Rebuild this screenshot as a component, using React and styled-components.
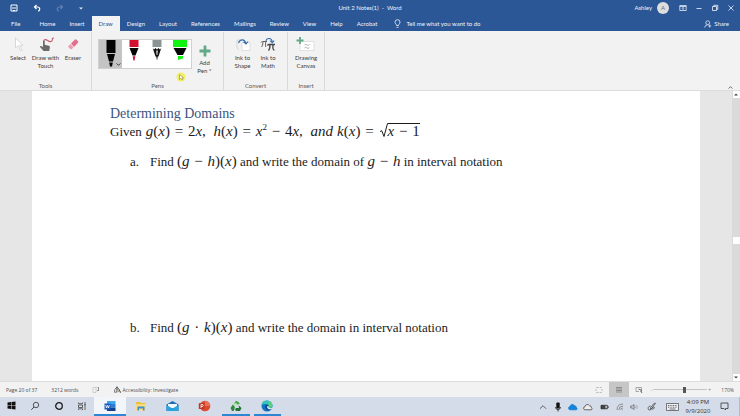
import styled, { createGlobalStyle, css } from "styled-components";
import { useState } from "react";

const GlobalStyle = createGlobalStyle`
  * {
    box-sizing: border-box;
    margin: 0;
    padding: 0;
  }

  body {
    font-family: Lato, "Open Sans", sans-serif;
    font-size: 6px;
    line-height: 8px;
    color: #3c3c3c;
    background-color: #e6e6e6;
  }

  button, input {
    font: inherit;
    color: inherit;
    border: none;
    background: none;
  }

  svg {
    display: block;
    flex-shrink: 0;
  }
`;

const Window = styled.div`
  min-height: 100vh;
  display: flex;
  flex-direction: column;
`;

const Header = styled.header`
  background-color: #2b5797;
  color: #eef3fa;
`;

const TitleBar = styled.div`
  display: grid;
  grid-template-columns: 1fr auto 1fr;
  align-items: center;
  height: 16px;
`;

const QuickAccess = styled.div`
  display: flex;
  align-items: center;
  gap: 15px;
  padding-left: 10px;
`;

const Title = styled.h1`
  font-size: 6px;
  font-weight: 400;
`;

const WindowControls = styled.div`
  display: flex;
  align-items: center;
  justify-content: flex-end;
  gap: 8px;
  padding-right: 5px;
  height: 12px;
`;

const Account = styled.button`
  display: flex;
  align-items: center;
  gap: 5px;
  margin-right: 2px;
`;

const Avatar = styled.span`
  width: 12px;
  height: 12px;
  border-radius: 50%;
  background-color: #dedede;
  color: #6b6b6b;
  line-height: 12px;
  text-align: center;
`;

const PlainButton = styled.button`
  display: flex;
  align-items: center;
  justify-content: center;
  opacity: ${(p) => (p.disabled ? 0.25 : 1)};
`;

const TabBar = styled.nav`
  display: flex;
  align-items: stretch;
  height: 15px;
  padding: 0 11px 0 4px;
`;

const Tab = styled.button`
  padding: 0 7px;
  white-space: nowrap;

  &:first-child {
    margin-right: 5px;
  }

  ${(p) =>
    p.$active &&
    css`
      background-color: #f3f3f3;
      color: #2b579a;
    `}
`;

const TellMe = styled.button`
  display: flex;
  align-items: center;
  gap: 5px;
  margin-left: 10px;
`;

const Share = styled.button`
  display: flex;
  align-items: center;
  gap: 2px;
  margin-left: auto;
`;

const Ribbon = styled.section`
  display: flex;
  height: 60px;
  padding-top: 1px;
  background-color: #f2f2f2;
  border-bottom: 1px solid #dcdcdc;
`;

const Group = styled.div`
  display: flex;
  flex-direction: column;
  justify-content: space-between;
  padding: 5px ${(p) => p.$pad}px 0;
  border-right: 1px solid #d9d9d9;
`;

const GroupItems = styled.div`
  display: flex;
  align-items: flex-start;
`;

const GroupLabel = styled.h2`
  font-size: 6px;
  font-weight: 400;
  text-align: center;
  color: #5c5c5c;
`;

const Tool = styled.button`
  display: flex;
  flex-direction: column;
  align-items: center;
  gap: 1px;
  width: ${(p) => p.$width}px;
  padding-top: ${(p) => (p.$low ? 7 : 0)}px;
  text-align: center;
`;

const PenGallery = styled.div`
  display: grid;
  grid-template-columns: repeat(4, 23px);
  height: 30px;
  margin-top: 2px;
  border: 1px solid #d0d0d0;
  background-color: #fff;
`;

const PenButton = styled.button`
  position: relative;
  display: flex;
  justify-content: center;
  background-color: ${(p) => (p.$active ? "#c4c4c4" : "#fff")};
`;

const PenMenu = styled.span`
  position: absolute;
  right: 1px;
  bottom: 1px;
`;

const Pointer = styled.svg`
  position: absolute;
  left: 176px;
  top: 72px;
`;

const Collapse = styled.button`
  align-self: flex-end;
  margin: 0 7px 0 auto;
`;

const Workspace = styled.main`
  flex: 1;
  display: flex;
  background-color: #e6e6e6;
`;

const Paper = styled.article`
  flex: 1;
  margin: 0 32px;
  padding: 14px 78px 0;
  background-color: #fff;
  color: #1c1c1c;
  font-family: "Liberation Serif", serif;
  font-size: 13px;
  line-height: 17px;
`;

const Heading = styled.h2`
  font-size: 14px;
  font-weight: 400;
  line-height: 18px;
  color: #3a5482;
`;

const Given = styled.p`
  display: flex;
  gap: 4px;
  white-space: nowrap;
`;

const Questions = styled.ol`
  list-style: none;
  counter-reset: question;
  padding: 13px 0 0 20px;
`;

const Question = styled.li`
  height: 166px;
  white-space: nowrap;
  counter-increment: question;

  &::before {
    content: counter(question, lower-alpha) ".";
    display: inline-block;
    width: 20px;
  }

  &:last-child {
    height: 54px;
  }
`;

const Math = styled.span`
  font-family: "Liberation Serif", serif;
  font-size: 15px;

  sup {
    font-size: 9px;
    line-height: 1px;
  }
`;

const Op = styled.span`
  margin: 0 1px;
`;

const Root = styled.span`
  display: inline-flex;
`;

const Radicand = styled.span`
  border-top: 1px solid #1c1c1c;
  height: 15px;
  line-height: 15px;
`;

const ScrollBar = styled.div`
  display: flex;
  flex-direction: column;
  align-items: center;
  justify-content: space-between;
  width: 8px;
  background-color: #dadada;
`;

const ScrollButton = styled.button`
  display: grid;
  place-content: center;
  width: 7px;
  height: 7px;
  background-color: #fff;
`;

const ScrollThumb = styled(ScrollButton)`
  margin-top: 9px;
`;

const StatusBar = styled.footer`
  display: flex;
  align-items: center;
  height: 16px;
  padding: 0 6px;
  border-top: 1px solid #dcdcdc;
  background-color: #f2f2f3;
  color: #4c4c4c;
  font-family: "Open Sans", sans-serif;
  font-size: 5px;
`;

const StatusItems = styled.div`
  display: flex;
  align-items: center;
  gap: 14px;
`;

const AccessItem = styled.button`
  display: flex;
  align-items: center;
  gap: 1px;
`;

const ViewItems = styled.div`
  display: flex;
  align-items: center;
  height: 15px;
  margin-left: auto;
`;

const ViewButton = styled.button`
  display: grid;
  place-content: center;
  width: 20px;
  height: 15px;
  background-color: ${(p) => (p.$active ? "#c6c6c6" : "transparent")};
`;

const Slider = styled.input`
  appearance: none;
  width: 54px;
  height: 7px;
  background: linear-gradient(#c4c4c4, #c4c4c4) center / 100% 1px no-repeat;

  &::-webkit-slider-thumb {
    appearance: none;
    width: 3px;
    height: 6px;
    background-color: #555;
  }
`;

const Zoom = styled.div`
  display: flex;
  align-items: center;
  gap: 1px;
  margin-left: 2px;
  color: #8a8a8a;
`;

const ZoomValue = styled.button`
  width: 23px;
  text-align: right;
  color: #555;
`;

const TaskBar = styled.nav`
  display: flex;
  height: 19px;
  background-color: #d5dce9;
`;

const SystemButtons = styled.div`
  display: grid;
  grid-template-columns: repeat(4, 1fr);
  width: 94px;
`;

const Apps = styled.div`
  display: grid;
  grid-template-columns: repeat(6, 1fr);
  width: 189px;
`;

const AppButton = styled.button`
  display: grid;
  place-content: center;
  margin: 0 ${(p) => (p.$running && !p.$active ? 2 : 0)}px;
  background-color: ${(p) => (p.$active ? "#f2f5fa" : "transparent")};
  border-bottom: 2px solid ${(p) => (p.$running ? "#2f86d2" : "transparent")};
`;

const Tray = styled.div`
  display: flex;
  align-items: center;
  margin-left: auto;
  padding-right: 5px;
  border-right: 1px solid #b4bccb;
`;

const TrayButton = styled.button`
  display: grid;
  place-content: center;
  width: ${(p) => p.$width || 16}px;
  height: 19px;
`;

const Clock = styled.time`
  width: 32px;
  text-align: center;
  color: #333;
  font-family: "Open Sans", sans-serif;
  line-height: 9px;
`;

const SaveIcon = () => (
  <svg width="8" height="8" viewBox="0 0 8 8">
    <path d="M1 1h6v6H1z" fill="none" stroke="#fff" />
    <path d="M2 4h4M3 6.5h2" stroke="#fff" />
  </svg>
);

const UndoIcon = ({ flip }) => (
  <svg width="8" height="8" viewBox="0 0 8 8" transform={flip ? "scale(-1 1)" : undefined}>
    <path d="M3.5 1L1.5 3l2 2M1.7 3H4.5c3 0 2.7 4 .5 4" fill="none" stroke="#fff" strokeWidth="1.2" />
  </svg>
);

const Chevron = ({ up, color = "#555", size = 5 }) => (
  <svg width={size} height={size} viewBox="0 0 6 6">
    <path d={up ? "M.7 4.3L3 2l2.3 2.3" : "M.7 1.7L3 4l2.3-2.3"} fill="none" stroke={color} strokeWidth={size > 5 ? 0.7 : 1} />
  </svg>
);

const Triangle = ({ up, color = "#444" }) => (
  <svg width="4" height="3" viewBox="0 0 4 3">
    <path d={up ? "M2 .5L4 2.5H0z" : "M0 .5h4L2 2.5z"} fill={color} />
  </svg>
);

const SelectIcon = () => (
  <svg width="14" height="16" viewBox="0 0 14 16">
    <path d="M4.500 1v10l2.500-2.300 2.500 5 1.600-.8-2.500-4.700H12z" fill="#fff" stroke="#c9c9c9" strokeWidth=".7" />
  </svg>
);

const TouchIcon = () => (
  <svg width="18" height="16" viewBox="0 0 18 16">
    <path d="M7 3C10 1 11 5.500 14 4.500 17 3.500 13.500 1 17 1" fill="none" stroke="#c55a6b" strokeWidth="1.100" />
    <path
      d="M6 3.500q1-.7 1.700 0v4.300l4.300 1q1 .3.900 1.500L12.200 14H6.600L3 10q-.2-1.200 1-1l2 1z"
      fill="#6a6a6a"
    />
  </svg>
);

const EraserIcon = () => (
  <svg width="14" height="16" viewBox="0 0 14 16">
    <path d="M5 6.500L9 2.500q.8-.6 1.500.2L12 4.300q.7.7 0 1.400L8 10z" fill="#e0708d" />
    <path d="M4.500 7l3 3.500-1.700 1.500q-.9.700-1.600 0L2.500 10.300q-.6-.8.100-1.500z" fill="#eb9db0" />
  </svg>
);

const PenIcon = ({ kind, color }) => {
  if (kind === "marker") {
    return (
      <svg width="16" height="28" viewBox="0 0 16 28">
        <path d="M1 0h14v7H1z" fill={color} />
        <path d="M1.500 8h13L11 15H5.500z" fill="#050505" />
        <path d="M6 16h5v2.500L6 20z" fill={color} />
      </svg>
    );
  }
  if (kind === "large") {
    return (
      <svg width="10" height="28" viewBox="0 0 10 28">
        <path d="M.5 0h9v13h-9z" fill={color} />
        <path d="M1 14h8L7 21.500H3z" fill={color} />
        <path d="M3.200 22.500h3.600L6 26.500H4z" fill={color} />
      </svg>
    );
  }
  return (
    <svg width="10" height="28" viewBox="0 0 10 28">
      <path d="M.5 0h9v7h-9z" fill={color} />
      {kind === "pencil" ? (
        <>
          <path d="M.7 8L2 9.500 3.500 8 5 9.500 6.500 8 8 9.500 9.300 8 6.500 16.500h-3z" fill="#111" />
          <path d="M4.200 10.500h1.600L5.400 15h-.8z" fill="#e7e7e7" />
          <path d="M4 16h2L5 20.500z" fill="#222" />
        </>
      ) : (
        <>
          <path d="M.5 8h9L6.500 15.500h-3z" fill="#050505" />
          <path d="M3.700 16.200h2.600L5.600 20.500H4.400z" fill={color} />
        </>
      )}
    </svg>
  );
};

const PlusIcon = () => (
  <svg width="14" height="14" viewBox="0 0 14 14">
    <path d="M7 1.500v11M1.500 7h11" stroke="#62a987" strokeWidth="2.800" />
  </svg>
);

const InkShapeIcon = () => (
  <svg width="16" height="16" viewBox="0 0 16 16">
    <path d="M7 5.500h8v8H7z" fill="#fff" stroke="#d2d2d2" strokeWidth=".7" />
    <path d="M2 3h4M2 3v8l2 2" fill="none" stroke="#c9c9c9" strokeWidth=".7" />
    <path d="M3.500 6C5 1.500 10 2 11 6.500M8.500 5l2.600 2L13 4.500" fill="none" stroke="#3d72ad" strokeWidth="1.200" />
  </svg>
);

const InkMathIcon = () => (
  <svg width="16" height="16" viewBox="0 0 16 16">
    <path d="M1 5.500q.5-1 1.500-1H7M3 4.600q0 4-1.500 5.400M5.700 4.600q-.3 4 0 5.400" fill="none" stroke="#666" strokeWidth="1" />
    <path d="M6 4C6.500.5 12 .5 12.200 5M10 3.700l2.200 2 2-2" fill="none" stroke="#3d72ad" strokeWidth="1.100" />
    <path d="M7.500 8.500q.5-1 1.500-1h6M10 7.600q0 4.500-1.500 6M13 7.600q-.6 5.800 1.500 5.600" fill="none" stroke="#444" strokeWidth="1.300" />
  </svg>
);

const CanvasIcon = () => (
  <svg width="20" height="16" viewBox="0 0 20 16">
    <path d="M4 4.500h14v9H4z" fill="#fff" stroke="#d6d6d6" strokeWidth=".7" />
    <path d="M4 0v7M.5 3.500h7" stroke="#62a987" strokeWidth="1.800" />
    <path d="M8.500 8c2-2 3 2 5-.5M8.500 11c2-2 3 2 5-.5" fill="none" stroke="#999" strokeWidth=".8" />
  </svg>
);

const BulbIcon = () => (
  <svg width="7" height="10" viewBox="0 0 7 10">
    <path d="M2.500 6.500C2.500 5 1 4.800 1 3.200a2.500 2.500 0 015 0C6 4.800 4.500 5 4.500 6.500zM2.500 8.300h2" fill="none" stroke="#dce6f4" strokeWidth=".9" />
  </svg>
);

const ShareIcon = () => (
  <svg width="8" height="8" viewBox="0 0 8 8">
    <circle cx="3.700" cy="2.700" r="1.900" fill="none" stroke="#e4ebf5" strokeWidth=".8" />
    <path d="M.7 7.500Q1 4.800 3.500 4.800M5.700 4.500v3M4.200 6h3" fill="none" stroke="#e4ebf5" strokeWidth=".8" />
  </svg>
);

const RibbonOptionsIcon = () => (
  <svg width="8" height="8" viewBox="0 0 8 8">
    <path d="M.8 1.500h6.400v5H.8zM.8 2.500h6.400M4 6V3.500M3 4.500l1-1 1 1" fill="none" stroke="#e4ebf5" strokeWidth=".8" />
  </svg>
);

const WindowIcon = ({ d }) => (
  <svg width="8" height="8" viewBox="0 0 8 8">
    <path d={d} fill="none" stroke="#f1f5fa" strokeWidth=".8" />
  </svg>
);

const ProofIcon = () => (
  <svg width="8" height="8" viewBox="0 0 8 8">
    <path d="M1 1.500h3v5H1zM4 1.500h2" fill="none" stroke="#bbb" strokeWidth=".6" />
    <path d="M6.500 1v3M5 4.500h2" stroke="#777" strokeWidth=".8" />
  </svg>
);

const AccessIcon = () => (
  <svg width="7" height="8" viewBox="0 0 7 8">
    <circle cx="3" cy="1.300" r=".9" fill="#444" />
    <path d="M1 2.500L3 3l2-.5M3 3v2L1.500 7M.7 3.500v3M5 3l1.500 4M3.500 6q2-3 3-.5" fill="none" stroke="#444" strokeWidth=".8" />
  </svg>
);

const ReadIcon = () => (
  <svg width="8" height="8" viewBox="0 0 8 8">
    <path d="M1 1.500h2.500M4.500 1.500H7M1 6.500h2.500M4.500 6.500H7M1 3v2M7 3v2" stroke="#aaa" strokeWidth=".7" />
  </svg>
);

const PrintIcon = () => (
  <svg width="8" height="8" viewBox="0 0 8 8">
    <path d="M1 1.500h6M1 3h6M1 4.500h6M1 6h6" stroke="#7d7d7d" strokeWidth=".8" />
  </svg>
);

const WebIcon = () => (
  <svg width="8" height="8" viewBox="0 0 8 8">
    <path d="M6.500 4V1.500H1v4h3" fill="none" stroke="#888" strokeWidth=".7" />
    <path d="M3.500 3l3.500 1.500-1.300.5L7 7" fill="none" stroke="#555" strokeWidth=".9" />
  </svg>
);

const WindowsIcon = () => (
  <svg width="9" height="9" viewBox="0 0 9 9">
    <path d="M.5 1.500L4 1v3.300H.5zM4.500 1l4-.6v3.900h-4zM.5 4.800H4V8l-3.500-.5zM4.500 4.800h4v3.800l-4-.6z" fill="#111" />
  </svg>
);

const SearchIcon = () => (
  <svg width="10" height="10" viewBox="0 0 10 10">
    <circle cx="6" cy="4" r="2.700" fill="none" stroke="#333" strokeWidth=".8" />
    <path d="M4 6L1.300 8.800" stroke="#333" strokeWidth=".9" />
  </svg>
);

const CortanaIcon = () => (
  <svg width="10" height="10" viewBox="0 0 10 10">
    <circle cx="5" cy="5" r="3.300" fill="none" stroke="#1a1a1a" strokeWidth="1.300" />
  </svg>
);

const TaskViewIcon = () => (
  <svg width="10" height="10" viewBox="0 0 10 10">
    <path d="M1.500 1.500v1.200h4V1.500M1.500 4h4v2.500h-4zM1.500 9V7.800h4V9M8 1v8M7.300 3.700h1.500" fill="none" stroke="#444" strokeWidth=".8" />
  </svg>
);

const WordIcon = () => (
  <svg width="12" height="12" viewBox="0 0 12 12">
    <path d="M3 1h8.500v3H3z" fill="#41a5ee" />
    <path d="M3 4h8.500v3.500H3z" fill="#2b7cd3" />
    <path d="M3 7.500h8.500V11H3z" fill="#103f91" />
    <path d="M.5 3.500h6v6h-6z" fill="#185abd" />
    <path d="M1.700 5l.8 3 1-2.500 1 2.500.8-3" fill="none" stroke="#fff" strokeWidth=".8" />
  </svg>
);

const FolderIcon = () => (
  <svg width="12" height="12" viewBox="0 0 12 12">
    <path d="M1 2h4l1 1h4.500v3H1z" fill="#f0bd3a" />
    <path d="M1 4h10v6.500H1z" fill="#f9dc7c" />
    <path d="M2.500 6.500h7v4H8V8.500H4v2H2.500z" fill="#3f90cf" />
  </svg>
);

const MailIcon = () => (
  <svg width="13" height="12" viewBox="0 0 13 12">
    <path d="M.5 4.500L6.500 1l6 3.500V11H.5z" fill="#1c6fb9" />
    <path d="M2 4h9v4H2z" fill="#f5f9fc" />
    <path d="M.5 5l6 3.500 6-3.500v6H.5z" fill="#2ba4dd" />
  </svg>
);

const PowerPointIcon = () => (
  <svg width="13" height="12" viewBox="0 0 13 12">
    <circle cx="7" cy="6" r="5.300" fill="#dc4a30" />
    <path d="M7 .7A5.300 5.300 0 0112.300 6H7z" fill="#ea7257" />
    <path d="M.8 3.200h5.700v5.700H.8z" fill="#c0321c" />
    <path d="M3 8V4.500h1q1.300 0 1.300 1T4 6.500H3" fill="none" stroke="#fff" strokeWidth=".8" />
  </svg>
);

const RecycleIcon = () => (
  <svg width="12" height="12" viewBox="0 0 12 12">
    <path d="M3.700 4L6 .7l2.700 1.400L9.800 4 7 4.500 6 3z" fill="#47a845" />
    <path d="M2.800 4.500L5 7 3.800 11H2L.5 8z" fill="#318b3d" />
    <path d="M8.500 5.200L11.500 8 10 11H6l-1-1.700L6 8h3z" fill="#237436" />
    <path d="M6 3l1 1.500L5 7 3.500 4.700z" fill="#b8e4a6" />
  </svg>
);

const EdgeIcon = () => (
  <svg width="12" height="12" viewBox="0 0 12 12">
    <circle cx="6" cy="6" r="5.500" fill="#1475c5" />
    <path d="M.5 5C1-.8 10-1 11.500 5c.4 2-1 3.200-3.200 3-1.300-.2-1-1-.7-1.600C8 4 4 3 .5 5z" fill="#36c4b5" />
    <path d="M8 1c4 1.500 4.500 6.500.3 7-1.300-.2-1-1-.7-1.600z" fill="#61d273" />
    <path d="M7.500 6.200C6 6 6 9 10.500 9c-3 3.500-8-.2-6-3.500C5.500 4.500 7.500 4.500 7.500 6.200z" fill="#0d478e" />
    <path d="M7.500 6q-1 1.700 2.500 2.300L11.500 7.500v1L9 9.500Q5.500 8.500 6.200 6.300z" fill="#eaf4fa" />
  </svg>
);

const MicIcon = () => (
  <svg width="8" height="10" viewBox="0 0 8 10">
    <rect x="2.300" y=".5" width="3.400" height="6" rx="1" fill="#111" />
    <path d="M1.500 5q0 2.500 2.500 2.500T6.500 5M4 7.500v2" fill="none" stroke="#111" strokeWidth=".8" />
  </svg>
);

const CloudIcon = ({ fill, stroke }) => (
  <svg width="10" height="8" viewBox="0 0 10 8">
    <path d="M2.300 6.800a1.600 1.600 0 01-.2-3.200 2.300 2.300 0 014.300-.9 2 2 0 012 2 1.100 1.100 0 01-.2 2.100z" fill={fill} stroke={stroke} strokeWidth=".9" />
  </svg>
);

const BatteryIcon = () => (
  <svg width="9" height="8" viewBox="0 0 9 8">
    <path d="M1 2.300h6.300v3.500H1z" fill="#444" stroke="#222" strokeWidth=".7" />
    <path d="M5.500 2.800h1.300v2.500H5.500z" fill="#ddd" />
    <path d="M8.300 3.300v1.500" stroke="#222" strokeWidth=".8" />
  </svg>
);

const WifiIcon = () => (
  <svg width="8" height="8" viewBox="0 0 8 8">
    <path d="M1 7Q1 1 7 1M2.800 7Q3 3 7 3M4.600 7Q4.700 5 7 5M6.500 7H7" fill="none" stroke="#777" strokeWidth=".8" />
  </svg>
);

const SpeakerIcon = () => (
  <svg width="9" height="8" viewBox="0 0 9 8">
    <path d="M.8 3h1.400L4 1.500v5L2.200 5H.8z" fill="none" stroke="#555" strokeWidth=".7" />
    <path d="M5.200 3v2M6.700 2q1 2 0 4" fill="none" stroke="#888" strokeWidth=".6" />
  </svg>
);

const StylusIcon = () => (
  <svg width="10" height="10" viewBox="0 0 10 10">
    <path d="M8.500 1.300L4.500 6.500l-1 .3v-1.200L7.500 1zM3.500 4c-3 0-3 4-1 4 2.500 0 2.500-3 4-3 2 0 0 3-2 2" fill="none" stroke="#333" strokeWidth=".7" />
  </svg>
);

const KeyboardIcon = () => (
  <svg width="13" height="8" viewBox="0 0 13 8">
    <path d="M.5.500h12v7H.5z" fill="#eef1f6" stroke="#444" strokeWidth=".7" />
    <path d="M2 2.500h9M2 4.200h9" stroke="#555" strokeWidth=".9" strokeDasharray="1 .7" />
    <path d="M3.500 6h6" stroke="#555" strokeWidth=".8" />
  </svg>
);

const NoticeIcon = () => (
  <svg width="9" height="9" viewBox="0 0 9 9">
    <path d="M1 1h7v5.500H5.500V8L4 6.500H1z" fill="none" stroke="#333" strokeWidth=".8" />
  </svg>
);

const RadicalIcon = () => (
  <svg width="9" height="15" viewBox="0 0 9 15">
    <path d="M1 8.500l1.700-.8L5 13.500 8.500.5H9" fill="none" stroke="#1c1c1c" strokeWidth="1" />
  </svg>
);

const tabs = [
  "File",
  "Home",
  "Insert",
  "Draw",
  "Design",
  "Layout",
  "References",
  "Mailings",
  "Review",
  "View",
  "Help",
  "Acrobat",
];

const pens = [
  { kind: "large", color: "#050505", label: "Black pen" },
  { kind: "pen", color: "#d30f32", label: "Red pen" },
  { kind: "pencil", color: "#8b9494", label: "Pencil" },
  { kind: "marker", color: "#10f510", label: "Highlighter" },
];

const apps = [
  { label: "Word", icon: <WordIcon />, active: true, running: true },
  { label: "File Explorer", icon: <FolderIcon /> },
  { label: "Mail", icon: <MailIcon /> },
  { label: "PowerPoint", icon: <PowerPointIcon /> },
  { label: "Camtasia", icon: <RecycleIcon />, running: true },
  { label: "Edge", icon: <EdgeIcon />, running: true },
];

const tray = [
  { label: "Show hidden icons", icon: <Chevron up size={8} />, width: 15 },
  { label: "Microphone", icon: <MicIcon />, width: 15 },
  { label: "OneDrive", icon: <CloudIcon fill="#1683d8" stroke="#1683d8" />, width: 15 },
  { label: "Cloud files", icon: <CloudIcon fill="#eee" stroke="#555" /> },
  { label: "Battery", icon: <BatteryIcon /> },
  { label: "Network", icon: <WifiIcon />, width: 15 },
  { label: "Volume", icon: <SpeakerIcon />, width: 15 },
  { label: "Ink workspace", icon: <StylusIcon />, width: 20 },
  { label: "Touch keyboard", icon: <KeyboardIcon />, width: 20 },
];

function App() {
  const [tab, setTab] = useState("Draw");
  const [pen, setPen] = useState(0);
  const [zoom, setZoom] = useState(170);

  return (
    <Window>
      <GlobalStyle />
      <Header>
        <TitleBar>
          <QuickAccess>
            <PlainButton aria-label="Save"><SaveIcon /></PlainButton>
            <PlainButton aria-label="Undo"><UndoIcon /></PlainButton>
            <PlainButton aria-label="Redo" disabled><UndoIcon flip /></PlainButton>
            <PlainButton aria-label="Customize toolbar"><Triangle color="#e4ebf5" /></PlainButton>
          </QuickAccess>
          <Title>Unit 2 Notes(1) &nbsp;-&nbsp; Word</Title>
          <WindowControls>
            <Account>
              Ashley
              <Avatar>A</Avatar>
            </Account>
            <PlainButton aria-label="Ribbon display options"><RibbonOptionsIcon /></PlainButton>
            <PlainButton aria-label="Minimize"><WindowIcon d="M1.500 4.500h5" /></PlainButton>
            <PlainButton aria-label="Restore"><WindowIcon d="M1.500 2.500h4v4h-4zM2.800 2.500V1.300h4v4H5.500" /></PlainButton>
            <PlainButton aria-label="Close"><WindowIcon d="M1.500 1.500l5 5M6.500 1.500l-5 5" /></PlainButton>
          </WindowControls>
        </TitleBar>
        <TabBar>
          {tabs.map((name) => (
            <Tab key={name} $active={name === tab} onClick={() => setTab(name)}>
              {name}
            </Tab>
          ))}
          <TellMe>
            <BulbIcon />
            Tell me what you want to do
          </TellMe>
          <Share>
            <ShareIcon />
            Share
          </Share>
        </TabBar>
      </Header>

      <Ribbon>
        <Group $pad={5}>
          <GroupItems>
            <Tool $width={26}><SelectIcon />Select</Tool>
            <Tool $width={29}><TouchIcon />Draw with Touch</Tool>
            <Tool $width={26}><EraserIcon />Eraser</Tool>
          </GroupItems>
          <GroupLabel>Tools</GroupLabel>
        </Group>
        <Group $pad={6}>
          <GroupItems>
            <PenGallery>
              {pens.map((item, idx) => (
                <PenButton
                  key={item.label}
                  aria-label={item.label}
                  $active={idx === pen}
                  onClick={() => setPen(idx)}
                >
                  <PenIcon kind={item.kind} color={item.color} />
                  {idx === pen && (
                    <PenMenu>
                      <Chevron color="#222" />
                    </PenMenu>
                  )}
                </PenButton>
              ))}
            </PenGallery>
            <Tool $width={25} $low>
              <PlusIcon />
              <span>Add<br />Pen ˅</span>
            </Tool>
          </GroupItems>
          <GroupLabel>Pens</GroupLabel>
        </Group>
        <Group $pad={6}>
          <GroupItems>
            <Tool $width={25}><InkShapeIcon /><span>Ink to<br />Shape</span></Tool>
            <Tool $width={26}><InkMathIcon /><span>Ink to<br />Math</span></Tool>
          </GroupItems>
          <GroupLabel>Convert</GroupLabel>
        </Group>
        <Group $pad={5}>
          <GroupItems>
            <Tool $width={26}><CanvasIcon />Drawing Canvas</Tool>
          </GroupItems>
          <GroupLabel>Insert</GroupLabel>
        </Group>
        <Collapse aria-label="Collapse the ribbon"><Chevron up /></Collapse>
      </Ribbon>

      <Workspace>
        <Paper>
          <Heading>Determining Domains</Heading>
          <Given>
            <span>Given</span>
            <Math><i>g</i>(<i>x</i>) <Op>=</Op> 2<i>x</i>,</Math>
            <Math>&nbsp;<i>h</i>(<i>x</i>) <Op>=</Op> <i>x</i><sup>2</sup> <Op>−</Op> 4<i>x</i>,</Math>
            <Math>&nbsp;<i>and</i></Math>
            <Math><i>k</i>(<i>x</i>) <Op>=</Op></Math>
            <Root>
              <RadicalIcon />
              <Radicand><Math><i>x</i> <Op>−</Op> 1</Math></Radicand>
            </Root>
          </Given>
          <Questions>
            <Question>
              Find <Math>(<i>g</i> <Op>−</Op> <i>h</i>)(<i>x</i>)</Math> and write the domain of{" "}
              <Math><i>g</i> <Op>−</Op> <i>h</i></Math> in interval notation
            </Question>
            <Question>
              Find <Math>(<i>g</i> <Op>·</Op> <i>k</i>)(<i>x</i>)</Math> and write the domain in interval notation
            </Question>
          </Questions>
        </Paper>
        <ScrollBar>
          <ScrollButton aria-label="Scroll up"><Triangle up /></ScrollButton>
          <ScrollThumb aria-label="Page position" />
          <ScrollButton aria-label="Scroll down"><Triangle /></ScrollButton>
        </ScrollBar>
      </Workspace>

      <StatusBar>
        <StatusItems>
          <span>Page 20 of 37</span>
          <span>3212 words</span>
          <PlainButton aria-label="Proofing"><ProofIcon /></PlainButton>
          <AccessItem><AccessIcon />Accessibility: Investigate</AccessItem>
        </StatusItems>
        <ViewItems>
          <ViewButton aria-label="Read mode"><ReadIcon /></ViewButton>
          <ViewButton aria-label="Print layout" $active><PrintIcon /></ViewButton>
          <ViewButton aria-label="Web layout"><WebIcon /></ViewButton>
          <Zoom>
            <span>-</span>
            <Slider
              type="range"
              aria-label="Zoom"
              min="10"
              max="280"
              value={zoom}
              onChange={(e) => setZoom(Number(e.target.value))}
            />
            <span>+</span>
          </Zoom>
          <ZoomValue>{zoom}%</ZoomValue>
        </ViewItems>
      </StatusBar>

      <TaskBar>
        <SystemButtons>
          <AppButton aria-label="Start"><WindowsIcon /></AppButton>
          <AppButton aria-label="Search"><SearchIcon /></AppButton>
          <AppButton aria-label="Cortana"><CortanaIcon /></AppButton>
          <AppButton aria-label="Task view"><TaskViewIcon /></AppButton>
        </SystemButtons>
        <Apps>
          {apps.map((app) => (
            <AppButton key={app.label} aria-label={app.label} $active={app.active} $running={app.running}>
              {app.icon}
            </AppButton>
          ))}
        </Apps>
        <Tray>
          {tray.map((item) => (
            <TrayButton key={item.label} aria-label={item.label} $width={item.width}>
              {item.icon}
            </TrayButton>
          ))}
          <Clock>4:09 PM<br />9/9/2020</Clock>
          <TrayButton aria-label="Notifications" $width={20}><NoticeIcon /></TrayButton>
        </Tray>
      </TaskBar>

      <Pointer width="10" height="10" viewBox="0 0 10 10">
        <circle cx="5" cy="5" r="4.500" fill="#f4ef5e" />
        <path d="M3.500 2.500v5l1.300-1.200L6 8l.8-.5-.8-1.700h1.500z" fill="#fff" stroke="#8b8740" strokeWidth=".6" />
      </Pointer>
    </Window>
  );
}

export default App;
